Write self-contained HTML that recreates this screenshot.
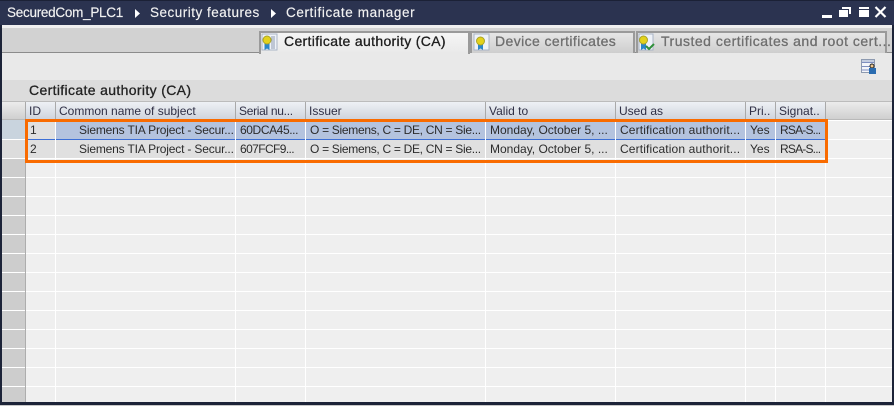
<!DOCTYPE html>
<html><head><meta charset="utf-8">
<style>
html,body{margin:0;padding:0;width:894px;height:406px;overflow:hidden;background:#e8e8e8}
div,span,svg{position:absolute;white-space:nowrap;box-sizing:border-box}
body{font-family:"Liberation Sans",sans-serif;color:#2b2b2b}
.t{font-size:12px;line-height:14px;height:14px;color:#2c2c2c}
.h{top:104px;color:#2f2f45}
.r1{top:123px}.r2{top:142px}
.v{top:120px;width:1px;height:282px;background:#fff}
.s{top:102px;width:1px;height:17px;background:#a9a9a9}
.tab{top:31px;height:22px;border:2px solid #9a9a9a;border-bottom:0;background:linear-gradient(#e6e6e6,#cecece)}
.tl{top:33px;font-size:14px;letter-spacing:.33px;line-height:16px;color:#6e6e6e;-webkit-text-stroke:.3px currentColor}
.tb{top:5px;font-size:13.500px;line-height:16px;color:#f2f2f2;-webkit-text-stroke:.15px currentColor}
</style></head><body>

<!-- title bar -->
<div style="left:0;top:0;width:894px;height:25px;background:#2b3350;border-top:1px solid #1b2136"></div>
<div class="tb" style="left:7px;letter-spacing:-.27px">SecuredCom_PLC1</div>
<svg style="left:135px;top:9px" width="6" height="9"><path d="M0 0L5 4.5L0 9Z" fill="#fff"/></svg>
<div class="tb" style="left:150px;letter-spacing:.5px">Security features</div>
<svg style="left:271px;top:9px" width="6" height="9"><path d="M0 0L5 4.5L0 9Z" fill="#fff"/></svg>
<div class="tb" style="left:286px;letter-spacing:.6px">Certificate manager</div>
<svg style="left:820px;top:6px" width="68" height="14">
<rect x="2" y="9" width="10" height="3" fill="#fff"/>
<path d="M19 4H28V11H19Z M22 1H31V8H29V3H22Z" fill="#fff"/>
<path d="M39 1H49V11H39Z" fill="#fff"/><rect x="39" y="3" width="10" height="1" fill="#2b3350"/>
<path d="M55.500 1L65.500 11M65.500 1L55.500 11" stroke="#fff" stroke-width="2.200" fill="none"/>
</svg>

<!-- tab strip -->
<div style="left:2px;top:25px;width:890px;height:3px;background:#efefef"></div>
<div style="left:2px;top:28px;width:890px;height:24px;background:#d2d2d2"></div>
<div style="left:2px;top:52px;width:890px;height:1px;background:#8c8c8c"></div>
<div style="left:2px;top:53px;width:890px;height:27px;background:#e9e9e9"></div>

<div class="tab" style="left:259px;width:211px;height:23px;background:linear-gradient(#f5f5f5,#e9e9e9)"></div>
<div class="tab" style="left:470px;width:165px"></div>
<div class="tab" style="left:636px;width:251px"></div>
<div style="left:261px;top:52px;width:207px;height:2px;background:#e9e9e9"></div>

<!-- tab icons -->
<svg style="left:261px;top:33px" width="18" height="18">
<rect x="1" y="1" width="15" height="16" fill="#eef2f8" stroke="#a9b4c6"/>
<path d="M11 3V16M13 3V16" stroke="#8d9ab0"/>
<path d="M3.5 10V17L6 15.5L8.500 17V10Z" fill="#2a86c8"/>
<circle cx="6" cy="7" r="4" fill="#e3d21c" stroke="#a9a32a"/>
</svg>
<svg style="left:473px;top:33px" width="18" height="18">
<rect x="1" y="1" width="15" height="16" fill="#eef2f8" stroke="#a9b4c6"/>
<path d="M5 17V11H10V17L7.500 15.500Z" fill="#2a86c8"/>
<circle cx="7.500" cy="8" r="4" fill="#e3d21c" stroke="#a9a32a"/>
</svg>
<svg style="left:637px;top:33px" width="18" height="18">
<rect x="2" y="1" width="14" height="16" fill="#eef2f8" stroke="#a9b4c6"/>
<path d="M4 17V10H9V17L6.500 15.500Z" fill="#2a86c8"/>
<circle cx="6.500" cy="7" r="4" fill="#e3d21c" stroke="#a9a32a"/>
<path d="M9 13L12 16L17 11" stroke="#2f8f3a" stroke-width="2" fill="none"/>
</svg>

<div class="tl" style="left:284px;color:#1c1c1c">Certificate authority (CA)</div>
<div class="tl" style="left:495px;letter-spacing:.4px">Device certificates</div>
<div class="tl" style="left:661px;letter-spacing:.5px">Trusted certificates and root cert...</div>

<!-- toolbar icon -->
<svg style="left:860px;top:58px" width="18" height="18">
<rect x="1.500" y="1.500" width="13" height="13" fill="#f4f6fa" stroke="#8d9ab0"/>
<path d="M2 4.500H14M2 8.500H14M2 12H10" stroke="#7f8fc0"/>
<rect x="2" y="2" width="12" height="2" fill="#c4cde0"/>
<circle cx="12" cy="8" r="2" fill="#f0c890" stroke="#222"/>
<rect x="9" y="10" width="7" height="6" fill="#2a6cb0"/>
</svg>

<!-- section header -->
<div style="left:2px;top:80px;width:890px;height:22px;background:#dcdcdc"></div>
<div style="left:29px;top:82px;font-size:14px;letter-spacing:.35px;-webkit-text-stroke:.3px #222;line-height:16px;color:#222">Certificate authority (CA)</div>

<!-- table header -->
<div style="left:2px;top:101px;width:890px;height:1px;background:#bcbcbc"></div>
<div style="left:2px;top:102px;width:890px;height:17px;background:linear-gradient(#ececec,#cfcfcf)"></div>
<div style="left:26px;top:102px;width:799px;height:17px;background:linear-gradient(#eef1f5,#cfd4dd)"></div>
<div style="left:2px;top:119px;width:890px;height:1px;background:#b9b9b9"></div>
<div class="s" style="left:25px"></div><div class="s" style="left:55px"></div><div class="s" style="left:235px"></div>
<div class="s" style="left:305px"></div><div class="s" style="left:485px"></div><div class="s" style="left:615px"></div>
<div class="s" style="left:745px"></div><div class="s" style="left:775px"></div><div class="s" style="left:825px"></div>

<!-- body grid -->
<div style="left:2px;top:120px;width:890px;height:282px;background-color:#efefef;background-image:repeating-linear-gradient(to bottom,#fff 0,#fff 1px,transparent 1px,transparent 19px)"></div>
<div style="left:2px;top:120px;width:23px;height:282px;background-color:#cdcdcd;background-image:repeating-linear-gradient(to bottom,#fff 0,#fff 1px,transparent 1px,transparent 19px)"></div>
<div style="left:25px;top:120px;width:1px;height:282px;background:#adadad"></div>
<div style="left:2px;top:120px;width:23px;height:19px;background:#c9d4de"></div>
<div style="left:2px;top:140px;width:23px;height:18px;background:#dcdcdc"></div>
<div class="v" style="left:55px"></div><div class="v" style="left:235px"></div><div class="v" style="left:305px"></div>
<div class="v" style="left:485px"></div><div class="v" style="left:615px"></div><div class="v" style="left:745px"></div>
<div class="v" style="left:775px"></div><div class="v" style="left:825px"></div>

<!-- rows -->
<div style="left:28px;top:121px;width:27px;height:18px;background:#e0e0e0"></div>
<div style="left:56px;top:121px;width:769px;height:18px;background:#b4c3de"></div>
<div style="left:28px;top:139px;width:797px;height:1px;background:#3c6fd6"></div>
<div style="left:28px;top:140px;width:27px;height:18px;background:#e0e0e0"></div>
<div style="left:56px;top:140px;width:769px;height:18px;background:#e0e0e0"></div>
<div class="v" style="left:55px;height:38px"></div><div class="v" style="left:235px;height:38px"></div><div class="v" style="left:305px;height:38px"></div>
<div class="v" style="left:485px;height:38px"></div><div class="v" style="left:615px;height:38px"></div><div class="v" style="left:745px;height:38px"></div>
<div class="v" style="left:775px;height:38px"></div>

<!-- header text -->
<div class="t h" style="left:29px">ID</div>
<div class="t h" style="left:59px">Common name of subject</div>
<div class="t h" style="left:239px;letter-spacing:-.3px">Serial nu...</div>
<div class="t h" style="left:309px">Issuer</div>
<div class="t h" style="left:489px">Valid to</div>
<div class="t h" style="left:619px">Used as</div>
<div class="t h" style="left:749px">Pri..</div>
<div class="t h" style="left:779px">Signat..</div>

<!-- row text -->
<div class="t r1" style="left:30px">1</div>
<div class="t r1" style="left:79px;letter-spacing:-.17px">Siemens TIA Project - Secur...</div>
<div class="t r1" style="left:240px;letter-spacing:-.4px">60DCA45...</div>
<div class="t r1" style="left:310px;letter-spacing:-.3px">O = Siemens, C = DE, CN = Sie...</div>
<div class="t r1" style="left:490px">Monday, October 5, ...</div>
<div class="t r1" style="left:620px;letter-spacing:.14px">Certification authorit...</div>
<div class="t r1" style="left:750px">Yes</div>
<div class="t r1" style="left:780px;letter-spacing:-.8px">RSA-S...</div>
<div class="t r2" style="left:30px">2</div>
<div class="t r2" style="left:79px;letter-spacing:-.17px">Siemens TIA Project - Secur...</div>
<div class="t r2" style="left:240px;letter-spacing:-.6px">607FCF9...</div>
<div class="t r2" style="left:310px;letter-spacing:-.3px">O = Siemens, C = DE, CN = Sie...</div>
<div class="t r2" style="left:490px">Monday, October 5, ...</div>
<div class="t r2" style="left:620px;letter-spacing:.14px">Certification authorit...</div>
<div class="t r2" style="left:750px">Yes</div>
<div class="t r2" style="left:780px;letter-spacing:-.8px">RSA-S...</div>

<!-- orange highlight -->
<div style="left:25px;top:119px;width:803px;height:44px;border:3px solid #f96b00"></div>

<!-- window frame -->
<div style="left:0;top:25px;width:2px;height:381px;background:#1c2338"></div>
<div style="left:892px;top:25px;width:2px;height:381px;background:#1c2338"></div>
<div style="left:0;top:402px;width:894px;height:3px;background:#1c2338"></div>
<div style="left:0;top:405px;width:894px;height:1px;background:#c8c8c8"></div>
</body></html>
